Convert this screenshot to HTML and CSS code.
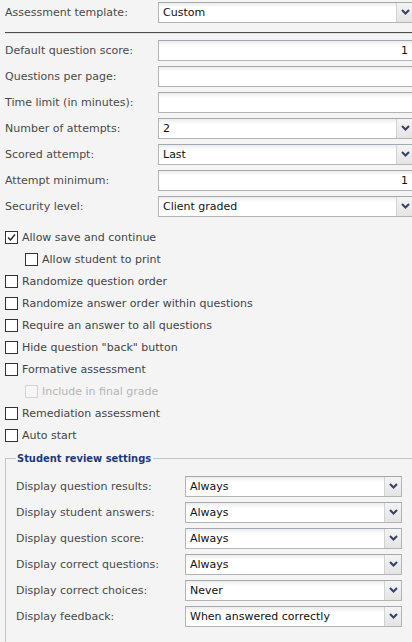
FILE: index.html
```html
<!DOCTYPE html>
<html>
<head>
<meta charset="utf-8">
<link rel="stylesheet" href="styles.css">
</head>
<body>
<div class="page">
  <div class="field first">
    <span class="lbl">Assessment template:</span>
    <div class="select"><span class="val">Custom</span><span class="btn"><svg width="9" height="6" viewBox="0 0 9 6"><path d="M1 1 L4.5 4.5 L8 1" fill="none" stroke="#34426a" stroke-width="2"/></svg></span></div>
  </div>
  <div class="sep"></div>
  <div class="fields">
    <div class="field"><span class="lbl">Default question score:</span><div class="input num">1</div></div>
    <div class="field"><span class="lbl">Questions per page:</span><div class="input"></div></div>
    <div class="field"><span class="lbl">Time limit (in minutes):</span><div class="input"></div></div>
    <div class="field"><span class="lbl">Number of attempts:</span><div class="select"><span class="val">2</span><span class="btn"><svg width="9" height="6" viewBox="0 0 9 6"><path d="M1 1 L4.5 4.5 L8 1" fill="none" stroke="#34426a" stroke-width="2"/></svg></span></div></div>
    <div class="field"><span class="lbl">Scored attempt:</span><div class="select"><span class="val">Last</span><span class="btn"><svg width="9" height="6" viewBox="0 0 9 6"><path d="M1 1 L4.5 4.5 L8 1" fill="none" stroke="#34426a" stroke-width="2"/></svg></span></div></div>
    <div class="field"><span class="lbl">Attempt minimum:</span><div class="input num">1</div></div>
    <div class="field"><span class="lbl">Security level:</span><div class="select"><span class="val">Client graded</span><span class="btn"><svg width="9" height="6" viewBox="0 0 9 6"><path d="M1 1 L4.5 4.5 L8 1" fill="none" stroke="#34426a" stroke-width="2"/></svg></span></div></div>
  </div>
  <div class="checks">
    <div class="check"><span class="box checked"><svg width="11" height="11" viewBox="0 0 11 11"><path d="M2 5.5 L4.5 8 L9 2.5" fill="none" stroke="#222" stroke-width="1.4"/></svg></span>Allow save and continue</div>
    <div class="check sub"><span class="box"></span>Allow student to print</div>
    <div class="check"><span class="box"></span>Randomize question order</div>
    <div class="check"><span class="box"></span>Randomize answer order within questions</div>
    <div class="check"><span class="box"></span>Require an answer to all questions</div>
    <div class="check"><span class="box"></span>Hide question "back" button</div>
    <div class="check"><span class="box"></span>Formative assessment</div>
    <div class="check sub disabled"><span class="box"></span>Include in final grade</div>
    <div class="check"><span class="box"></span>Remediation assessment</div>
    <div class="check"><span class="box"></span>Auto start</div>
  </div>
  <fieldset class="review">
    <legend>Student review settings</legend>
    <div class="rfield"><span class="lbl">Display question results:</span><div class="select"><span class="val">Always</span><span class="btn"><svg width="9" height="6" viewBox="0 0 9 6"><path d="M1 1 L4.5 4.5 L8 1" fill="none" stroke="#34426a" stroke-width="2"/></svg></span></div></div>
    <div class="rfield"><span class="lbl">Display student answers:</span><div class="select"><span class="val">Always</span><span class="btn"><svg width="9" height="6" viewBox="0 0 9 6"><path d="M1 1 L4.5 4.5 L8 1" fill="none" stroke="#34426a" stroke-width="2"/></svg></span></div></div>
    <div class="rfield"><span class="lbl">Display question score:</span><div class="select"><span class="val">Always</span><span class="btn"><svg width="9" height="6" viewBox="0 0 9 6"><path d="M1 1 L4.5 4.5 L8 1" fill="none" stroke="#34426a" stroke-width="2"/></svg></span></div></div>
    <div class="rfield"><span class="lbl">Display correct questions:</span><div class="select"><span class="val">Always</span><span class="btn"><svg width="9" height="6" viewBox="0 0 9 6"><path d="M1 1 L4.5 4.5 L8 1" fill="none" stroke="#34426a" stroke-width="2"/></svg></span></div></div>
    <div class="rfield"><span class="lbl">Display correct choices:</span><div class="select"><span class="val">Never</span><span class="btn"><svg width="9" height="6" viewBox="0 0 9 6"><path d="M1 1 L4.5 4.5 L8 1" fill="none" stroke="#34426a" stroke-width="2"/></svg></span></div></div>
    <div class="rfield"><span class="lbl">Display feedback:</span><div class="select"><span class="val">When answered correctly</span><span class="btn"><svg width="9" height="6" viewBox="0 0 9 6"><path d="M1 1 L4.5 4.5 L8 1" fill="none" stroke="#34426a" stroke-width="2"/></svg></span></div></div>
  </fieldset>
</div>
</body>
</html>
```

FILE: styles.css
```css
html, body {
  margin: 0;
  padding: 0;
  background: #f4f4f4;
  overflow: hidden;
}
body {
  font-family: "DejaVu Sans", Verdana, sans-serif;
  font-size: 11px;
  color: #4a4a4a;
}
.page {
  width: 420px;
  padding-left: 5px;
  box-sizing: border-box;
}
.field {
  display: grid;
  grid-template-columns: 153px 256px;
  height: 21px;
  align-items: center;
}
.field.first {
  margin-top: 2px;
}
.lbl {
  white-space: nowrap;
}
.sep {
  margin-top: 9px;
  height: 0;
  border-top: 1px solid #4d4d4d;
  border-bottom: 1px solid #e2e2e2;
  width: 410px;
}
.fields {
  margin-top: 6px;
  display: flex;
  flex-direction: column;
  gap: 5px;
}
.input, .select {
  height: 21px;
  box-sizing: border-box;
  border: 1px solid #b4b4b4;
  border-top-color: #a4a8b4;
  background: linear-gradient(#ececec 0, #ffffff 5px, #ffffff 100%);
  color: #111;
  display: flex;
  align-items: center;
}
.input.num {
  justify-content: flex-end;
  padding-right: 5px;
}
.select .val {
  flex: 1;
  padding-left: 4px;
  white-space: nowrap;
  overflow: hidden;
}
.btn {
  width: 17px;
  align-self: stretch;
  border-left: 1px solid #d2d2d2;
  background: linear-gradient(#f4f4f4, #e4e4e4);
  display: flex;
  align-items: center;
  justify-content: center;
  padding-bottom: 2px;
  box-sizing: border-box;
}
.checks {
  margin-top: 9px;
  display: flex;
  flex-direction: column;
}
.check {
  height: 22px;
  display: flex;
  align-items: center;
  gap: 4px;
  color: #444;
  white-space: nowrap;
}
.check.sub {
  padding-left: 20px;
}
.box {
  width: 13px;
  height: 13px;
  box-sizing: border-box;
  border: 1px solid #333;
  background: #fff;
  display: flex;
  align-items: center;
  justify-content: center;
}
.check.disabled {
  color: #b4b4b4;
}
.check.disabled .box {
  border-color: #d4d4d4;
  background: #f6f6f6;
}
.review {
  margin: 6px 0 0 0;
  padding: 11px 0 30px 10px;
  border: 1px solid #c4c4c4;
  border-right: none;
  min-width: 0;
  display: flex;
  flex-direction: column;
  gap: 5px;
}
.review legend {
  font-family: "DejaVu Sans Condensed", "DejaVu Sans", sans-serif;
  font-weight: bold;
  color: #1c3a7c;
  padding: 0 2px 0 1px;
  margin-left: 0;
}
.rfield {
  display: grid;
  grid-template-columns: 169px 217px;
  height: 21px;
  align-items: center;
}
```
